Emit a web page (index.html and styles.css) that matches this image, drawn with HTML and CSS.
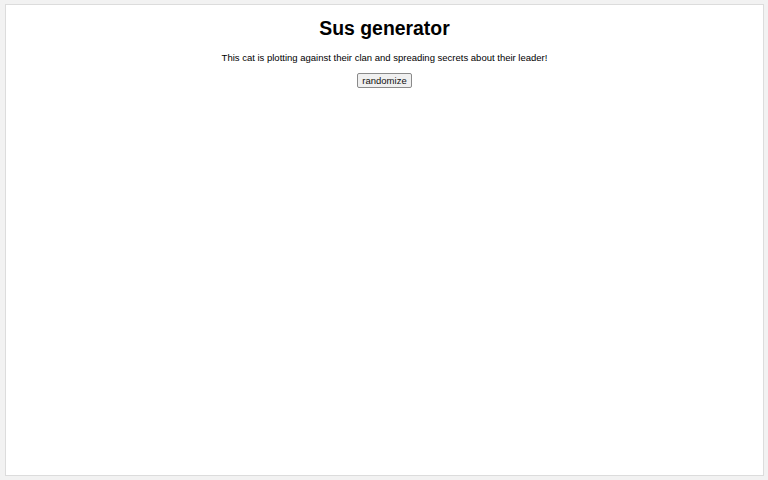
FILE: index.html
```html
<!DOCTYPE html>
<html lang="en">
<head>
<meta charset="utf-8">
<title>Sus generator</title>
<link rel="stylesheet" href="styles.css">
</head>
<body>
<main class="panel">
  <h1 class="title">Sus generator</h1>
  <p class="result">This cat is plotting against their clan and spreading secrets about their leader!</p>
  <button class="btn" type="button">randomize</button>
</main>
</body>
</html>
```
FILE: styles.css
```css
html, body {
  margin: 0;
  height: 100%;
}

body {
  background: #f2f2f2;
  padding: 4px 4px 4px 5px;
  box-sizing: border-box;
  font-family: "Liberation Sans", Arial, sans-serif;
  color: #000;
}

.panel {
  box-sizing: border-box;
  height: 100%;
  background: #fff;
  border: 1px solid #dcdcdc;
  display: flex;
  flex-direction: column;
  align-items: center;
  padding-top: 11px;
}

.title {
  margin: 0;
  font-size: 19.4px;
  font-weight: bold;
  line-height: 24px;
}

.result {
  margin: 11px 0 0;
  font-size: 9.5px;
  line-height: 13px;
}

.btn {
  margin-top: 9px;
  font-family: "Liberation Sans", Arial, sans-serif;
  font-size: 9.5px;
  line-height: 12px;
  padding: 1px 4px 0;
  background: #f0f0f0;
  border: 1px solid #8a8a8a;
  border-radius: 2px;
  color: #111;
}
```
